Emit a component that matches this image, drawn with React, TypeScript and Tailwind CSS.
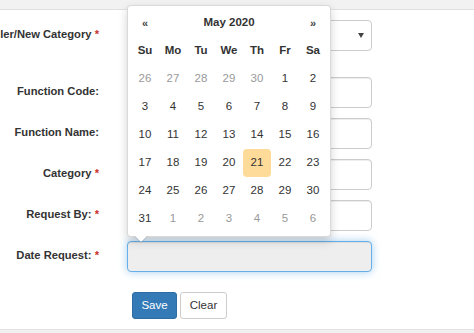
import React from "react";

const font = { fontFamily: '"Liberation Sans", Arial, Helvetica, sans-serif' };

type Day = { n: number; muted?: boolean; today?: boolean };

const weeks: Day[][] = [
    [{ n: 26, muted: true }, { n: 27, muted: true }, { n: 28, muted: true }, { n: 29, muted: true }, { n: 30, muted: true }, { n: 1 }, { n: 2 }],
    [{ n: 3 }, { n: 4 }, { n: 5 }, { n: 6 }, { n: 7 }, { n: 8 }, { n: 9 }],
    [{ n: 10 }, { n: 11 }, { n: 12 }, { n: 13 }, { n: 14 }, { n: 15 }, { n: 16 }],
    [{ n: 17 }, { n: 18 }, { n: 19 }, { n: 20 }, { n: 21, today: true }, { n: 22 }, { n: 23 }],
    [{ n: 24 }, { n: 25 }, { n: 26 }, { n: 27 }, { n: 28 }, { n: 29 }, { n: 30 }],
    [{ n: 31 }, { n: 1, muted: true }, { n: 2, muted: true }, { n: 3, muted: true }, { n: 4, muted: true }, { n: 5, muted: true }, { n: 6, muted: true }],
];

const dows = ["Su", "Mo", "Tu", "We", "Th", "Fr", "Sa"];

function Label({ text, required }: { text: string; required?: boolean }) {
    return (
        <div className="w-[99px] shrink-0 flex justify-end whitespace-nowrap pt-[6px] text-[11.2px] leading-[16px] font-bold text-[#333]">
            <span>
                {text}
                {required && <span className="text-[#c9302c]"> *</span>}
            </span>
        </div>
    );
}

function Row({ label, required, children, className }: { label: string; required?: boolean; children: React.ReactNode; className?: string }) {
    return (
        <div className={"flex items-start " + (className || "")}>
            <Label text={label} required={required} />
            <div className="ml-[28px] w-[245px]">{children}</div>
        </div>
    );
}

function TextInput() {
    return <div className="h-[31px] rounded-[4px] border border-[#ccc] bg-white shadow-[inset_0_1px_1px_rgba(0,0,0,0.075)]" />;
}

function DatePicker() {
    return (
        <div className="absolute left-[127px] top-[5px] w-[204px] rounded-[4px] border border-[rgba(0,0,0,0.15)] bg-white p-[3px] shadow-[0_4px_10px_rgba(0,0,0,0.18)] text-[11.5px] text-[#333]">
            <div className="grid grid-cols-7">
                <div className="h-[28px] flex items-center justify-center text-[#444] text-[11px] font-bold">«</div>
                <div className="col-span-5 h-[28px] flex items-center justify-center font-bold">May 2020</div>
                <div className="h-[28px] flex items-center justify-center text-[#444] text-[11px] font-bold">»</div>
                {dows.map((d) => (
                    <div key={d} className="h-[28px] flex items-center justify-center font-bold">
                        {d}
                    </div>
                ))}
                {weeks.flat().map((d, i) => (
                    <div
                        key={i}
                        className={
                            "h-[28px] flex items-center justify-center rounded-[4px] " +
                            (d.today ? "bg-[#ffdb99] text-[#333]" : d.muted ? "text-[#999]" : "text-[#333]")
                        }
                    >
                        {d.n}
                    </div>
                ))}
            </div>
            {/* arrow pointing down at the input */}
            <div className="absolute left-[6px] -bottom-[7px] w-0 h-0 border-l-[7px] border-r-[7px] border-t-[7px] border-l-transparent border-r-transparent border-t-[rgba(0,0,0,0.15)]" />
            <div className="absolute left-[7px] -bottom-[6px] w-0 h-0 border-l-[6px] border-r-[6px] border-t-[6px] border-l-transparent border-r-transparent border-t-white" />
        </div>
    );
}

export default function App() {
    return (
        <div className="relative w-[474px] h-[333px] overflow-hidden bg-white flex flex-col" style={font}>
            <div className="h-[10px] shrink-0 bg-[#f2f2f2] border-b border-[#e0e0e0]" />

            <div className="flex-1 flex flex-col pt-[10px]">
                <Row label="Handler/New Category" required>
                    <div className="h-[31px] rounded-[4px] border border-[#ccc] bg-white flex items-center justify-end pr-[7px]">
                        <svg width="6" height="5" viewBox="0 0 6 5">
                            <path d="M0 0 L6 0 L3 5 Z" fill="#444" />
                        </svg>
                    </div>
                </Row>
                <Row label="Function Code:" className="mt-[26px]">
                    <TextInput />
                </Row>
                <Row label="Function Name:" className="mt-[10px]">
                    <TextInput />
                </Row>
                <Row label="Category" required className="mt-[10px]">
                    <TextInput />
                </Row>
                <Row label="Request By:" required className="mt-[10px]">
                    <TextInput />
                </Row>
                <Row label="Date Request:" required className="mt-[10px]">
                    <div className="h-[31px] rounded-[4px] border border-[#66afe9] bg-[#eee] shadow-[inset_0_1px_1px_rgba(0,0,0,0.075),0_0_8px_rgba(102,175,233,0.6)]" />
                </Row>
                <div className="flex gap-[3px] ml-[132px] mt-[20px]">
                    <button className="w-[45px] h-[27px] rounded-[3px] border border-[#2e6da4] bg-[#337ab7] text-white text-[11.5px]">
                        Save
                    </button>
                    <button className="w-[47px] h-[27px] rounded-[3px] border border-[#ccc] bg-white text-[#333] text-[11.5px]">
                        Clear
                    </button>
                </div>
            </div>

            <div className="h-[4px] shrink-0 bg-[#f0f0f0] border-t border-[#e3e3e3]" />

            <DatePicker />
        </div>
    );
}
